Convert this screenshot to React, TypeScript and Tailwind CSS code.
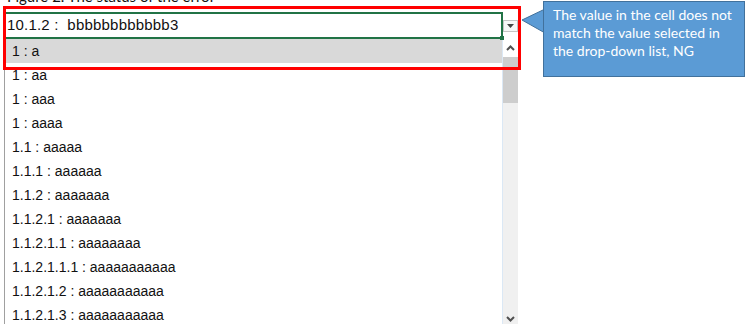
// Excel cell with an open validation drop-down, plus a callout

const ROWS = [
  '1 : a',
  '1 : aa',
  '1 : aaa',
  '1 : aaaa',
  '1.1 : aaaaa',
  '1.1.1 : aaaaaa',
  '1.1.2 : aaaaaaa',
  '1.1.2.1 : aaaaaaa',
  '1.1.2.1.1 : aaaaaaaa',
  '1.1.2.1.1.1 : aaaaaaaaaaa',
  '1.1.2.1.2 : aaaaaaaaaaa',
  '1.1.2.1.3 : aaaaaaaaaaa',
]

// ── Scrollbar ─────────────────────────────────────────────────────────────────

function Scrollbar() {
  return (
    <div className="w-[16px] shrink-0 flex flex-col border-l border-[#dbe8f5] bg-[#f0f0f0]">
      <div className="h-[18px] bg-white flex items-center justify-center">
        <svg width="9" height="6" viewBox="0 0 9 6">
          <polyline points="1,5 4.5,1.5 8,5" fill="none" stroke="#505050" strokeWidth="2" />
        </svg>
      </div>
      <div className="h-[46px] bg-[#cdcdcd]" />
      <div className="flex-1" />
      <div className="h-[17px] flex items-center justify-center">
        <svg width="9" height="6" viewBox="0 0 9 6">
          <polyline points="1,1 4.5,4.5 8,1" fill="none" stroke="#505050" strokeWidth="2" />
        </svg>
      </div>
    </div>
  )
}

// ── Page ──────────────────────────────────────────────────────────────────────

export default function App() {
  return (
    <div
      className="relative w-[748px] h-[324px] overflow-hidden bg-white text-[#111]"
      style={{ fontFamily: '"Liberation Sans", Arial, sans-serif' }}
    >
      {/* Caption, mostly cut off at the top */}
      <div className="h-[12px] overflow-hidden pl-[7px]">
        <div className="-mt-[12px] text-[15px] leading-[16px] font-['Lato',sans-serif]">
          Figure 2. The status of the error
        </div>
      </div>

      {/* Cell + drop-down button */}
      <div className="flex">
        <div className="ml-[4px] w-[499px] h-[27px] border-y-2 border-r-2 border-[#217346] relative flex items-center pl-[3px] text-[15px]">
          <span className="whitespace-pre tracking-[0.2px]">10.1.2 :  bbbbbbbbbbbb3</span>
          <div className="absolute -right-[3px] -bottom-[3px] w-[4px] h-[4px] bg-[#217346]" />
        </div>
        <div className="mt-[8px] w-[15px] h-[12px] border border-[#c4c4c4] bg-[#f7f7f7] flex items-center justify-center">
          <svg width="7" height="4" viewBox="0 0 7 4">
            <polygon points="0,0 7,0 3.5,4" fill="#444" />
          </svg>
        </div>
      </div>

      {/* Drop-down list */}
      <div className="ml-[4px] w-[514px] flex border-l border-[#a0a0a0]">
        <div className="flex-1 flex flex-col">
          {ROWS.map((r, i) => (
            <div
              key={r}
              className={`h-[24px] flex items-center pl-[7px] text-[14px] whitespace-pre ${i === 0 ? 'bg-[#d9d9d9]' : ''}`}
            >
              {r}
            </div>
          ))}
        </div>
        <Scrollbar />
      </div>

      {/* Red highlight */}
      <div className="absolute left-[3px] top-[6px] w-[518px] h-[64px] border-[3px] border-[#ff0000] pointer-events-none" />

      {/* Callout */}
      <svg className="absolute left-[521px] top-[6px]" width="25" height="30" viewBox="0 0 25 30">
        <polygon points="1,14 24,3 24,27" fill="#5b9bd5" />
        <polyline points="24,3 1,14 24,27" fill="none" stroke="#41719c" strokeWidth="1" />
      </svg>
      <div className="absolute left-[543px] top-[1px] w-[202px] h-[76px] bg-[#5b9bd5] border border-[#41719c] pl-[9px] pt-[4px] text-white text-[14px] leading-[18px] font-['Lato',sans-serif]">
        The value in the cell does not
        <br />
        match the value selected in
        <br />
        the drop-down list, NG
      </div>
    </div>
  )
}
